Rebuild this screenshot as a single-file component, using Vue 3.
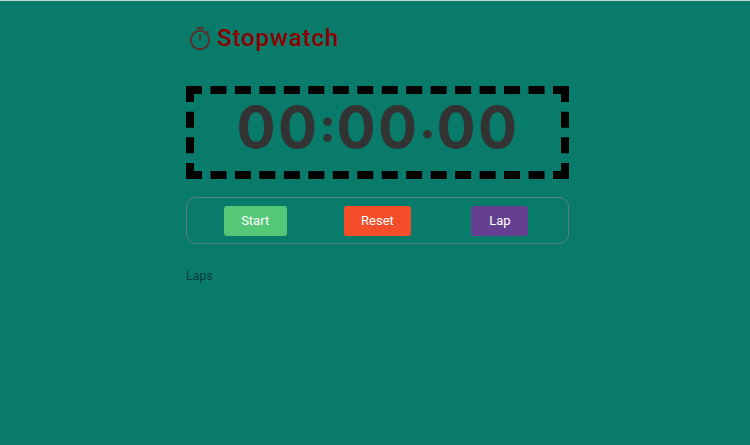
<template>
  <div class="page">
    <div class="stopwatch">
      <h1 class="title">
        <svg class="title-icon" viewBox="0 0 24 24" fill="none" stroke="currentColor" stroke-width="2">
          <circle cx="12" cy="14" r="9.2" />
          <path d="M8.6 2h6.8" stroke-width="2.2" />
          <path d="M12 8.5v5.5" />
          <path d="M19 6.8l1.7-1.7" />
        </svg>
        <span>Stopwatch</span>
      </h1>

      <div class="display">
        <span class="digits">00</span>
        <span class="sep colon">:</span>
        <span class="digits">00</span>
        <span class="sep dot">·</span>
        <span class="digits">00</span>
      </div>

      <div class="controls">
        <div v-for="btn in buttons" :key="btn.label" class="control-cell">
          <button :class="['btn', btn.cls]">{{ btn.label }}</button>
        </div>
      </div>

      <p class="laps">Laps</p>
    </div>
  </div>
</template>

<script setup>
const buttons = [
  { label: 'Start', cls: 'btn-start' },
  { label: 'Reset', cls: 'btn-reset' },
  { label: 'Lap', cls: 'btn-lap' },
]
</script>

<style>
html,
body {
  margin: 0;
  background: #097b6a;
}
</style>

<style scoped>
.page {
  height: 445px;
  box-sizing: border-box;
  border-top: 1px solid #c9d6d3;
  background: #097b6a;
  font-family: Roboto, sans-serif;
  overflow: hidden;
}

.stopwatch {
  width: 383px;
  margin-left: 186px;
}

.title {
  display: flex;
  align-items: center;
  gap: 5px;
  height: 26px;
  margin: 24px 0 0 2px;
  color: #8b0000;
  font-size: 24px;
  font-weight: 500;
  letter-spacing: 0.9px;
}

.title-icon {
  width: 24px;
  height: 24px;
  opacity: 0.6;
}

.display {
  box-sizing: border-box;
  display: flex;
  justify-content: center;
  height: 93px;
  margin-top: 35px;
  border: 8px dashed #000;
  color: #333;
  font-family: Inter, sans-serif;
  font-size: 58px;
  font-weight: 700;
  line-height: 66px;
}

.digits {
  width: 82px;
  letter-spacing: 2.5px;
}

.sep {
  width: 18px;
  text-align: center;
  font-size: 46px;
  font-weight: 800;
}

.colon {
  line-height: 62px;
}

.dot {
  line-height: 78px;
}

.controls {
  box-sizing: border-box;
  display: grid;
  grid-template-columns: repeat(3, 1fr);
  height: 47px;
  margin-top: 18px;
  padding: 0 7px;
  align-items: center;
  border: 1.5px solid #5a827c;
  border-radius: 10px;
}

.control-cell {
  display: flex;
  justify-content: center;
}

.btn {
  height: 30px;
  border: none;
  border-radius: 3px;
  color: #fff;
  font-family: inherit;
  font-size: 13px;
}

.btn-start {
  width: 63px;
  background: #55c878;
}

.btn-reset {
  width: 67px;
  background: #f44d2a;
}

.btn-lap {
  width: 57px;
  background: #653f90;
}

.laps {
  margin: 23px 0 0;
  color: #053d39;
  font-size: 12.5px;
  line-height: 17px;
}
</style>
